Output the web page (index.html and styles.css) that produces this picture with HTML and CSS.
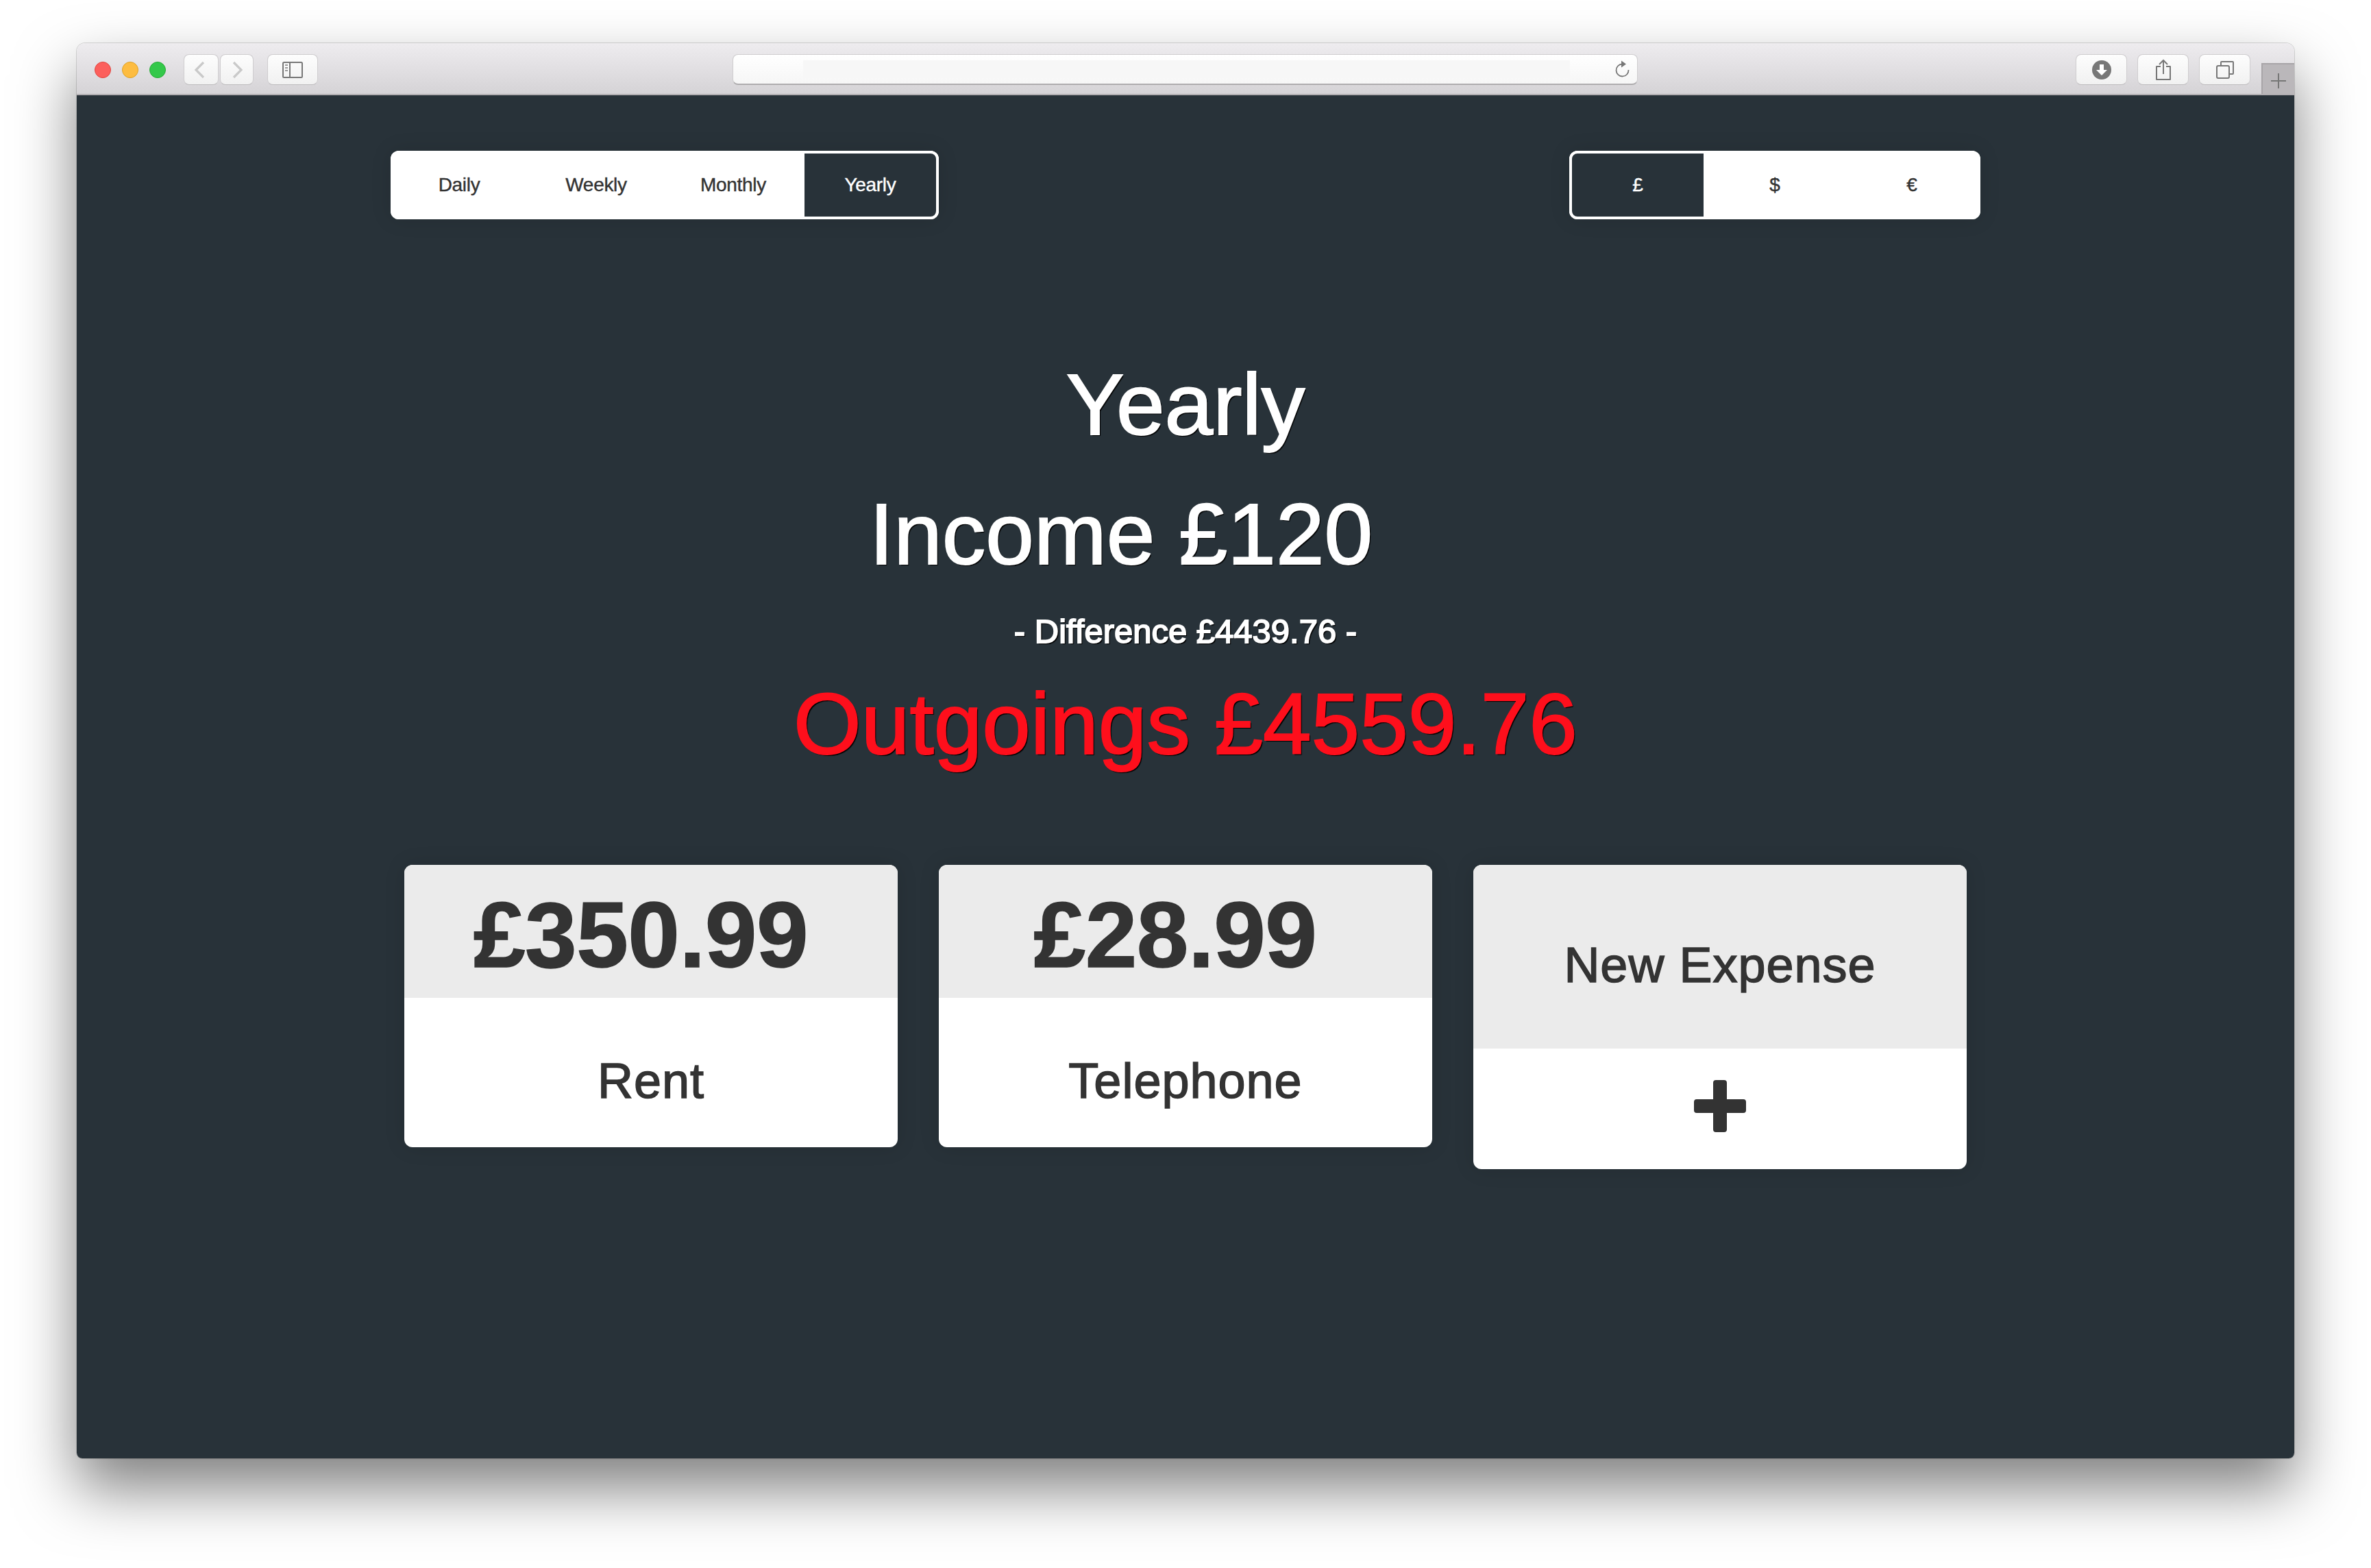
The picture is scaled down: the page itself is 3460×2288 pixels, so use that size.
FILE: index.html
```html
<!DOCTYPE html>
<html lang="en">
  <head>
    <meta charset="UTF-8" />
    <title>Budget</title>
    <link rel="stylesheet" href="styles.css">
  </head>
  <body>
    <div class="window">
      <div class="titlebar">
        <div class="lights">
          <span class="light red"></span>
          <span class="light yellow"></span>
          <span class="light green"></span>
        </div>
        <div class="nav">
          <div class="tool back">
            <svg width="16" height="26" viewBox="0 0 16 26"><path d="M14 2 3 13l11 11" fill="none" stroke="#c9c9c9" stroke-width="3.2"/></svg>
          </div>
          <div class="tool forward">
            <svg width="16" height="26" viewBox="0 0 16 26"><path d="m2 2 11 11L2 24" fill="none" stroke="#c9c9c9" stroke-width="3.2"/></svg>
          </div>
        </div>
        <div class="tool sidebar">
          <svg width="30" height="24" viewBox="0 0 30 24">
            <rect x="1" y="1" width="28" height="22" rx="1.5" fill="none" stroke="#777" stroke-width="2"/>
            <path d="M11 1v22" stroke="#777" stroke-width="2"/>
            <path d="M4 5h4M4 9h4M4 13h4" stroke="#999" stroke-width="2"/>
          </svg>
        </div>
        <div class="urlbar">
          <div class="urlfade"></div>
          <svg class="reload" width="24" height="28" viewBox="0 0 24 28">
            <path d="M12 6.5a9 9 0 1 0 9.5 8.5" fill="none" stroke="#777" stroke-width="1.8"/>
            <path d="M11 1.5 18 6.5 11 11.5z" fill="#777"/>
          </svg>
        </div>
        <div class="actions">
          <div class="tool action">
            <svg width="28" height="28" viewBox="0 0 28 28">
              <circle cx="14" cy="14" r="14" fill="#777"/>
              <path d="M11 6h6v8h5l-8 8-8-8h5z" fill="#fff"/>
            </svg>
          </div>
          <div class="tool action">
            <svg width="24" height="32" viewBox="0 0 24 32">
              <path d="M8 11H2v19h20V11h-6" fill="none" stroke="#777" stroke-width="2" stroke-linejoin="round"/>
              <path d="M12 22V2M6 8l6-6 6 6" fill="none" stroke="#777" stroke-width="2"/>
            </svg>
          </div>
          <div class="tool action">
            <svg width="26" height="26" viewBox="0 0 26 26">
              <path d="M7 6V2a1 1 0 0 1 1-1h16a1 1 0 0 1 1 1v16a1 1 0 0 1-1 1h-4" fill="none" stroke="#777" stroke-width="2"/>
              <rect x="1" y="7" width="18" height="18" rx="2" fill="none" stroke="#777" stroke-width="2"/>
            </svg>
          </div>
        </div>
        <div class="newtab">
          <svg width="24" height="24" viewBox="0 0 24 24"><path d="M12 1v22M1 12h22" stroke="#777" stroke-width="2"/></svg>
        </div>
      </div>

      <div class="page">
        <div class="container">
          <div class="controls">
            <div class="segment">
              <button>Daily</button>
              <button>Weekly</button>
              <button>Monthly</button>
              <button class="active">Yearly</button>
            </div>
            <div class="segment">
              <button class="active">£</button>
              <button>$</button>
              <button>€</button>
            </div>
          </div>

          <h1 class="period">Yearly</h1>
          <h1 class="income">Income £120</h1>
          <h3 class="difference">- Difference £4439.76 -</h3>
          <h1 class="outgoings">Outgoings £4559.76</h1>

          <div class="cards">
            <div class="card">
              <div class="amount">£350.99</div>
              <div class="name">Rent</div>
            </div>
            <div class="card">
              <div class="amount">£28.99</div>
              <div class="name">Telephone</div>
            </div>
            <div class="card">
              <div class="new-title">New Expense</div>
              <div class="new-add">
                <svg width="76" height="76" viewBox="0 0 76 76">
                  <path d="M32 0h12a4 4 0 0 1 4 4v24h24a4 4 0 0 1 4 4v12a4 4 0 0 1-4 4H48v24a4 4 0 0 1-4 4H32a4 4 0 0 1-4-4V48H4a4 4 0 0 1-4-4V32a4 4 0 0 1 4-4h24V4a4 4 0 0 1 4-4z" fill="#333"/>
                </svg>
              </div>
            </div>
          </div>
        </div>
      </div>
    </div>
  </body>
</html>
```

FILE: styles.css
```css
* {
  box-sizing: border-box;
}

html,
body {
  margin: 0;
  height: 2288px;
  overflow: hidden;
  background: #fff;
}

body {
  font-family: 'Liberation Sans', Arial, sans-serif;
  color: #333;
  padding: 63px 112px 0;
}

.window {
  height: 2065px;
  display: flex;
  flex-direction: column;
  border-radius: 12px 12px 8px 8px;
  box-shadow: 0 0 0 1px rgba(0, 0, 0, 0.14), 0 44px 88px rgba(0, 0, 0, 0.5);
}

/* browser chrome */
.titlebar {
  height: 76px;
  flex: none;
  display: flex;
  align-items: flex-start;
  padding: 16px 0 0 26px;
  background: linear-gradient(#eeecef, #d5d3d6);
  border-bottom: 2px solid #b2afb2;
  border-radius: 12px 12px 0 0;
  position: relative;
}

.lights {
  display: flex;
  gap: 16px;
  padding-top: 11px;
}

.light {
  width: 24px;
  height: 24px;
  border-radius: 50%;
}

.red {
  background: #fc5f5c;
  border: 1px solid #e0443e;
}

.yellow {
  background: #fdbc40;
  border: 1px solid #dea123;
}

.green {
  background: #34c84a;
  border: 1px solid #27aa35;
}

.nav {
  display: flex;
  gap: 2px;
  margin-left: 26px;
}

.tool {
  height: 45px;
  display: flex;
  align-items: center;
  justify-content: center;
  background: linear-gradient(#fdfdfd, #f1f1f1);
  border: 1px solid #cfcdcf;
  border-bottom-color: #bdbbbd;
  border-radius: 8px;
}

.back {
  width: 51px;
  padding-right: 6px;
}

.forward {
  width: 49px;
  padding-left: 3px;
}

.sidebar {
  width: 74px;
  margin-left: 20px;
}

.urlbar {
  width: 1321px;
  height: 45px;
  margin-left: 605px;
  display: flex;
  align-items: center;
  background: linear-gradient(#fff, #f6f6f6);
  border: 1px solid #cfcdcf;
  border-bottom: 2px solid #aeacae;
  border-radius: 8px;
}

.urlfade {
  width: 1119px;
  height: 26px;
  margin-left: 102px;
  background: #f7f7f7;
}

.reload {
  margin-left: 64px;
}

.actions {
  display: flex;
  gap: 15px;
  margin-left: 639px;
}

.action {
  width: 75px;
}

.newtab {
  position: absolute;
  right: 0;
  bottom: 0;
  width: 48px;
  height: 45px;
  display: flex;
  align-items: center;
  justify-content: center;
  background: #bab7ba;
  border: 1px solid #a8a5a8;
  border-width: 2px 0 0 2px;
  padding-top: 4px;
}

/* app */
.page {
  flex: 1;
  background: #283239;
  border-radius: 0 0 8px 8px;
}

.container {
  width: 2320px;
  margin: 0 auto;
  padding-top: 81px;
}

.controls {
  display: flex;
  justify-content: space-between;
}

.segment {
  display: flex;
  background: #fff;
  border-radius: 12px;
  box-shadow: 0 0 30px rgba(0, 0, 0, 0.12);
}

.segment button {
  width: 200px;
  height: 100px;
  padding: 0;
  font-family: inherit;
  font-size: 28px;
  letter-spacing: -0.3px;
  -webkit-text-stroke: 0.4px currentColor;
  color: #333;
  background: #fff;
  border: 4px solid #fff;
}

.segment button:first-child {
  border-radius: 12px 0 0 12px;
}

.segment button:last-child {
  border-radius: 0 12px 12px 0;
}

.segment button.active {
  background: #283239;
  color: #fff;
}

h1,
h3 {
  margin: 0;
  font-weight: normal;
  text-align: center;
  color: #fff;
  text-shadow: 2px 2px 1px #000;
}

h1 {
  font-size: 127px;
  line-height: 189px;
  -webkit-text-stroke: 2px currentColor;
}

.period {
  margin-top: 176px;
}

.income {
  padding-right: 188px;
}

.difference {
  font-size: 49px;
  line-height: 94px;
  -webkit-text-stroke: 1.8px currentColor;
}

.outgoings {
  line-height: 177px;
  color: #fe0f1c;
}

.cards {
  display: grid;
  grid-template-columns: repeat(3, 720px);
  gap: 60px;
  align-items: start;
  padding: 0 20px;
  margin-top: 117px;
}

.card {
  background: #fff;
  border-radius: 12px;
  overflow: hidden;
  text-align: center;
  box-shadow: 0 0 30px rgba(0, 0, 0, 0.12);
}

.amount {
  height: 194px;
  padding: 10px 30px 0 0;
  font-size: 136px;
  line-height: 184px;
  font-weight: bold;
  letter-spacing: -0.5px;
  -webkit-text-stroke: 1.5px currentColor;
  background: #ebebeb;
}

.name {
  height: 218px;
  padding-top: 24px;
  font-size: 72px;
  line-height: 194px;
  letter-spacing: 1px;
  -webkit-text-stroke: 1.5px currentColor;
}

.new-title {
  height: 268px;
  padding-top: 24px;
  font-size: 72px;
  line-height: 244px;
  letter-spacing: 1px;
  -webkit-text-stroke: 1.5px currentColor;
  background: #ebebeb;
}

.new-add {
  height: 176px;
  padding-bottom: 8px;
  display: flex;
  align-items: center;
  justify-content: center;
}
```
